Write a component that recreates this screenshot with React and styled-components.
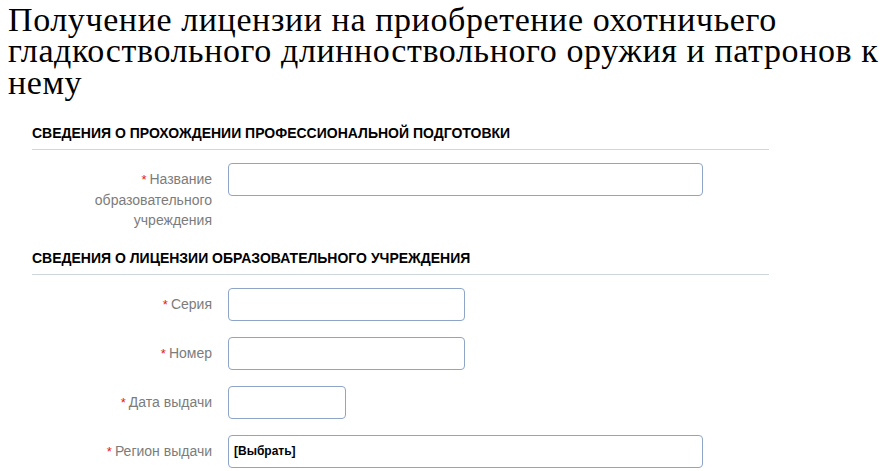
import styled, { createGlobalStyle } from "styled-components";

const GlobalStyle = createGlobalStyle`
  body {
    margin: 0;
    background: #fff;
    font-family: "Liberation Sans", Arial, sans-serif;
  }
`

const Page = styled.div`
  padding: 4px 0 0 8px;
`

const Title = styled.h1`
  margin: 0 0 27px 0;
  font-family: "Liberation Serif", "Times New Roman", serif;
  font-size: 34px;
  letter-spacing: 0.6px;
  font-weight: normal;
  line-height: 31.3px;
  color: #000;
`

const Form = styled.div`
  width: 737px;
  margin-left: 24px;
`

const Section = styled.h3`
  margin: 0 0 13px 0;
  padding-bottom: 8px;
  border-bottom: 1px solid #cdd7dd;
  font-size: 14px;
  line-height: 16px;
  font-weight: bold;
  text-transform: uppercase;
  color: #000;
`

const Row = styled.div`
  display: grid;
  grid-template-columns: 180px 1fr;
  column-gap: 16px;
  align-items: start;
  margin-bottom: ${(p) => p.$gap || 17}px;
`

const Label = styled.label`
  padding-top: 6px;
  text-align: right;
  font-size: 14px;
  line-height: 20px;
  color: #7c7c7c;
`

const Required = styled.span`
  color: #e8151b;
  font-size: 13px;
  margin-right: 3px;
`

const Input = styled.input`
  box-sizing: border-box;
  display: block;
  width: ${(p) => p.$width}px;
  height: 33px;
  margin: 0;
  padding: 0 6px;
  border: 1px solid #8ea5c8;
  border-radius: 4px;
  background: #fff;
  font-family: inherit;
  font-size: 14px;
  outline: none;
`

const Select = styled.div`
  box-sizing: border-box;
  display: flex;
  align-items: center;
  width: ${(p) => p.$width}px;
  height: 33px;
  padding: 0 5px;
  border: 1px solid #8ea5c8;
  border-radius: 4px;
  font-size: 12px;
  font-weight: bold;
  color: #000;
`

const licenseFields = [
  { label: "Серия", width: 237 },
  { label: "Номер", width: 237 },
  { label: "Дата выдачи", width: 118 },
];

const App = () => {
  return (
    <Page>
      <GlobalStyle />
      <Title>
        Получение лицензии на приобретение охотничьего гладкоствольного
        длинноствольного оружия и патронов к нему
      </Title>
      <Form>
        <Section>Сведения о прохождении профессиональной подготовки</Section>
        <Row $gap={20}>
          <Label>
            <Required>*</Required>Название образовательного учреждения
          </Label>
          <Input type="text" $width={475} />
        </Row>

        <Section>Сведения о лицензии образовательного учреждения</Section>
        {licenseFields.map((f) => (
          <Row key={f.label} $gap={16}>
            <Label>
              <Required>*</Required>
              {f.label}
            </Label>
            <Input type="text" $width={f.width} />
          </Row>
        ))}
        <Row $gap={0}>
          <Label>
            <Required>*</Required>Регион выдачи
          </Label>
          <Select $width={475}>[Выбрать]</Select>
        </Row>
      </Form>
    </Page>
  );
};

export default App;
